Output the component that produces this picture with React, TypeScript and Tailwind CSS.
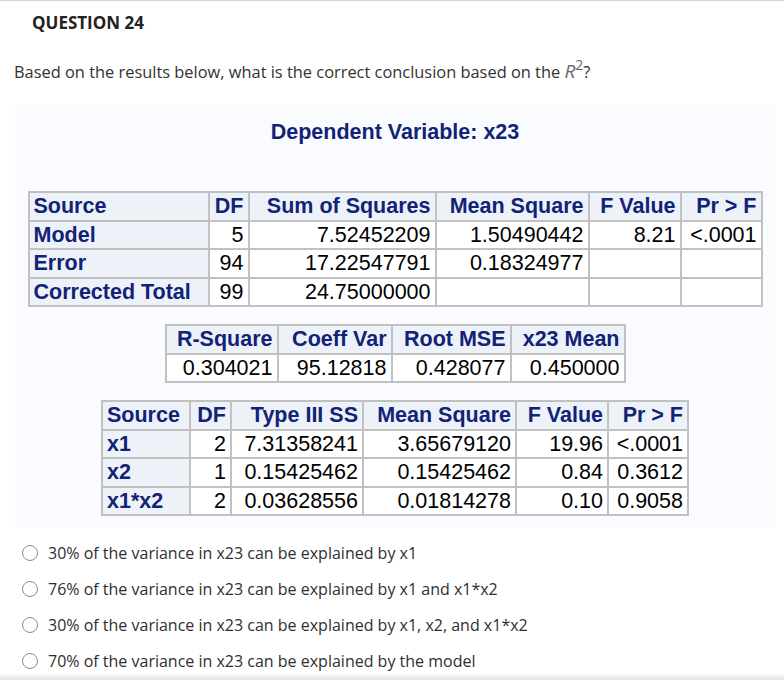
import React from "react";

const th =
  "border border-[#c1c1c1] bg-[#edf2f9] text-[#112277] font-bold px-[4px] h-[28.5px] leading-[24px] whitespace-nowrap align-middle";
const td =
  "border border-[#c1c1c1] bg-white text-black font-normal px-[4px] h-[28.5px] leading-[24px] whitespace-nowrap text-right align-middle";
const table = "border-separate border-spacing-0 table-fixed border border-[#c1c1c1] bg-white";

function AnovaTable() {
  const rows = [
    ["Model", "5", "7.52452209", "1.50490442", "8.21", "<.0001"],
    ["Error", "94", "17.22547791", "0.18324977", "", ""],
    ["Corrected Total", "99", "24.75000000", "", "", ""],
  ];
  return (
    <table className={`${table} w-[735px] mt-[44px]`}>
      <thead>
        <tr>
          <th className={`${th} w-[180px] text-left`}>Source</th>
          <th className={`${th} w-[40px] text-right`}>DF</th>
          <th className={`${th} w-[187px] text-right`}>Sum of Squares</th>
          <th className={`${th} w-[153px] text-right`}>Mean Square</th>
          <th className={`${th} w-[92px] text-right`}>F Value</th>
          <th className={`${th} w-[81px] text-right`}>Pr &gt; F</th>
        </tr>
      </thead>
      <tbody>
        {rows.map((r) => (
          <tr key={r[0]}>
            <th className={`${th} text-left`}>{r[0]}</th>
            {r.slice(1).map((c, i) => (
              <td key={i} className={td}>
                {c}
              </td>
            ))}
          </tr>
        ))}
      </tbody>
    </table>
  );
}

function FitTable() {
  return (
    <table className={`${table} w-[461px] mt-[17px]`}>
      <thead>
        <tr>
          <th className={`${th} w-[112px] text-right`}>R-Square</th>
          <th className={`${th} w-[114px] text-right`}>Coeff Var</th>
          <th className={`${th} w-[119px] text-right`}>Root MSE</th>
          <th className={`${th} w-[114px] text-right`}>x23 Mean</th>
        </tr>
      </thead>
      <tbody>
        <tr>
          <td className={td}>0.304021</td>
          <td className={td}>95.12818</td>
          <td className={td}>0.428077</td>
          <td className={td}>0.450000</td>
        </tr>
      </tbody>
    </table>
  );
}

function TypeThreeTable() {
  const rows = [
    ["x1", "2", "7.31358241", "3.65679120", "19.96", "<.0001"],
    ["x2", "1", "0.15425462", "0.15425462", "0.84", "0.3612"],
    ["x1*x2", "2", "0.03628556", "0.01814278", "0.10", "0.9058"],
  ];
  return (
    <table className={`${table} w-[588px] mt-[17px]`}>
      <thead>
        <tr>
          <th className={`${th} w-[88px] text-left`}>Source</th>
          <th className={`${th} w-[41px] text-right`}>DF</th>
          <th className={`${th} w-[132px] text-right`}>Type III SS</th>
          <th className={`${th} w-[153px] text-right`}>Mean Square</th>
          <th className={`${th} w-[92px] text-right`}>F Value</th>
          <th className={`${th} w-[80px] text-right`}>Pr &gt; F</th>
        </tr>
      </thead>
      <tbody>
        {rows.map((r) => (
          <tr key={r[0]}>
            <th className={`${th} text-left`}>{r[0]}</th>
            {r.slice(1).map((c, i) => (
              <td key={i} className={td}>
                {c}
              </td>
            ))}
          </tr>
        ))}
      </tbody>
    </table>
  );
}

const answers = [
  "30% of the variance in x23 can be explained by x1",
  "76% of the variance in x23 can be explained by x1 and x1*x2",
  "30% of the variance in x23 can be explained by x1, x2, and x1*x2",
  "70% of the variance in x23 can be explained by the model",
];

export default function App() {
  return (
    <div className="relative w-[784px] h-[680px] overflow-hidden bg-white border-t border-[#d4d4d4] font-['Open_Sans',sans-serif] text-[#333]">
      <h1 className="pl-[32px] pt-[10px] text-[17px] leading-[24px] font-bold text-[#222]">QUESTION 24</h1>

      <p className="pl-[14px] mt-[26px] h-[22px] text-[16.4px] leading-[22px] text-[#333]">
        Based on the results below, what is the correct conclusion based on the{" "}
        <span className="italic text-[#666] text-[19px] leading-none">R</span>
        <span className="relative -top-[8px] text-[14px] leading-none text-[#666]">2</span>?
      </p>

      {/* SAS output */}
      <div className="ml-[15px] mt-[22px] w-[760px] h-[422px] bg-[#fafbfe] pt-[13px] flex flex-col items-center font-['Liberation_Sans',Arial,sans-serif] text-[21.5px] leading-[29px]">
        <div className="font-bold text-[#112277]">Dependent Variable: x23</div>
        <AnovaTable />
        <FitTable />
        <TypeThreeTable />
      </div>

      <div className="mt-[8px]">
        {answers.map((a) => (
          <label key={a} className="flex items-center h-[36px] pl-[22px] gap-[10px] text-[16px] text-[#2f2f2f]">
            <span className="w-[16px] h-[16px] rounded-full border-[1.5px] border-[#8c8c8c] bg-white shrink-0" />
            <span>{a}</span>
          </label>
        ))}
      </div>

      <div className="absolute left-0 right-0 bottom-0 h-[7px] bg-gradient-to-b from-white/0 to-[#e2e2e2]" />
    </div>
  );
}
